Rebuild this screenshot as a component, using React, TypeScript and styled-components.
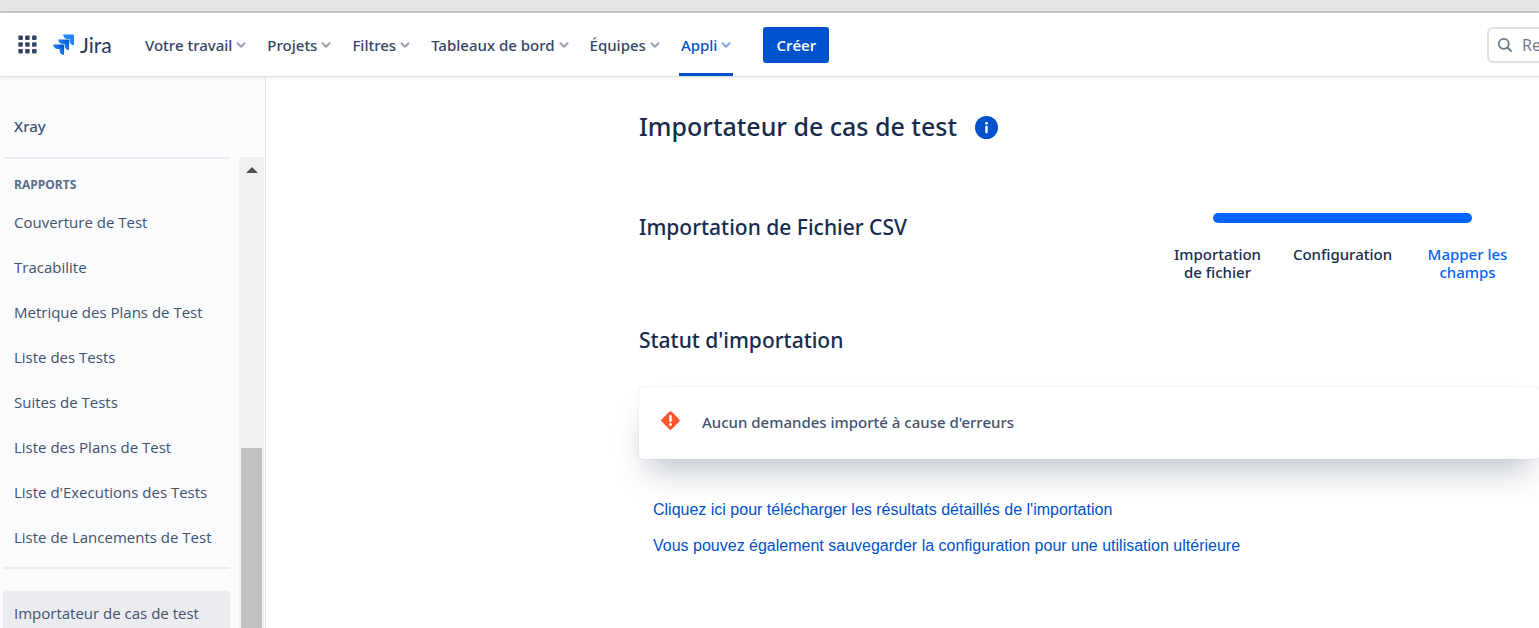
import React from "react";
import styled, { createGlobalStyle, css } from "styled-components";

const sans = `"Segoe UI", "Open Sans", "Noto Sans", sans-serif`;
const sansMedium = `"Segoe UI", "Noto Sans", "Open Sans", sans-serif`;

const GlobalStyle = createGlobalStyle`
  *, *::before, *::after { box-sizing: border-box; }
  html, body, #root { height: 100%; }
  body {
    margin: 0;
    background: #fff;
    color: #172b4d;
    font-family: ${sans};
    font-size: 15px;
    overflow: hidden;
  }
  h1, h2, p, ul, ol { margin: 0; padding: 0; }
  ul, ol { list-style: none; }
  button { font-family: inherit; border: 0; background: none; padding: 0; cursor: pointer; }
  a { text-decoration: none; }
`;

const Page = styled.div`
  display: flex;
  flex-direction: column;
  height: 100%;
`;

const BrowserStrip = styled.div`
  flex: none;
  height: 13px;
  background: #e4e4e4;
  border-bottom: 2px solid #c6c6c6;
`;

const Header = styled.header`
  position: relative;
  z-index: 1;
  flex: none;
  display: flex;
  align-items: center;
  height: 64px;
  padding-left: 18px;
  background: #fff;
  border-bottom: 1px solid #dcdfe8;
  box-shadow: 0 1px 3px rgba(9, 30, 66, 0.08);
  white-space: nowrap;
`;

const AppSwitcher = styled.button`
  display: flex;
  margin-right: 15px;
`;

const Brand = styled.a`
  display: flex;
  align-items: center;
  gap: 6px;
  width: 81px;
  color: #253858;
  font-family: Lato, ${sans};
  font-size: 21px;
  line-height: 24px;
`;

const Nav = styled.nav`
  display: flex;
  align-self: stretch;
  gap: 17px;
  margin-left: 9px;
`;

const NavItem = styled.button<{ $active?: boolean }>`
  display: flex;
  align-items: center;
  gap: 4px;
  padding: 0 2px;
  color: ${(p) => (p.$active ? "#0052cc" : "#344563")};
  font-family: ${sansMedium};
  font-size: 15px;
  font-weight: 500;
  border-top: 3px solid transparent;
  border-bottom: 3px solid ${(p) => (p.$active ? "#0052cc" : "transparent")};

  svg {
    opacity: 0.5;
  }
`;

const CreateButton = styled.button`
  height: 36px;
  margin-left: 30px;
  padding: 0 13px;
  border-radius: 3px;
  background: #0052cc;
  color: #fff;
  font-size: 15px;
  font-weight: 600;
`;

const SearchSlot = styled.div`
  flex: none;
  width: 52px;
  margin-left: auto;
  overflow: hidden;
`;

const SearchBox = styled.label`
  display: flex;
  align-items: center;
  gap: 9px;
  width: 200px;
  height: 36px;
  padding-left: 8px;
  border: 2px solid #dfe1e6;
  border-radius: 6px;
  color: #6b778c;
`;

const SearchInput = styled.input`
  width: 140px;
  padding: 0;
  border: 0;
  outline: 0;
  background: none;
  font-family: inherit;
  font-size: 16px;

  &::placeholder {
    color: #6b778c;
    opacity: 1;
  }
`;

const Body = styled.div`
  flex: 1;
  display: flex;
  min-height: 0;
`;

const Sidebar = styled.aside`
  flex: none;
  display: flex;
  flex-direction: column;
  width: 266px;
  background: #fafbfc;
  border-right: 1px solid #e0e1e4;
`;

const ProjectName = styled.p`
  padding: 37px 14px 0;
  height: 80px;
  color: #42526e;
  font-family: ${sansMedium};
  font-weight: 500;
  line-height: 24px;
`;

const SideScroll = styled.div`
  flex: 1;
  display: flex;
  justify-content: space-between;
  min-height: 0;
  padding-right: 1px;
`;

const SideNav = styled.nav`
  width: 227px;
  margin-left: 3px;
  overflow: hidden;
`;

const Divider = styled.div`
  height: 2px;
  background: #ebecf0;
`;

const GroupTitle = styled.p`
  padding: 17px 11px 6px;
  color: #5e6c84;
  font-size: 12px;
  font-weight: 700;
  line-height: 18px;
`;

const SideLink = styled.a<{ $selected?: boolean }>`
  display: block;
  padding: 0 11px;
  border-radius: 3px;
  color: #42526e;
  font-size: 15px;
  line-height: 45px;
  white-space: nowrap;
  ${(p) =>
    p.$selected &&
    css`
      background: #ebecf0;
    `}
`;

const SideList = styled.ul`
  &:first-of-type {
    margin-bottom: 7px;
  }
  &:last-of-type {
    margin-top: 22px;
  }
`;

const ScrollTrack = styled.div`
  display: flex;
  flex-direction: column;
  align-items: center;
  width: 25px;
  background: #f1f1f1;
`;

const ScrollArrow = styled.div`
  display: flex;
  align-items: center;
  justify-content: center;
  height: 26px;
`;

const ScrollSpace = styled.div`
  flex: 265;
`;

const ScrollThumb = styled.div`
  flex: 180;
  width: 21px;
  background: #c1c1c1;
`;

const Main = styled.main`
  flex: 1;
  min-width: 0;
  padding-top: 30px;
`;

const Content = styled.div`
  width: 900px;
  max-width: 100%;
  margin-left: auto;
`;

const TitleRow = styled.div`
  display: flex;
  align-items: center;
  gap: 18px;
`;

const PageTitle = styled.h1`
  font-family: ${sansMedium};
  font-size: 25px;
  font-weight: 500;
  line-height: 38px;
  padding-bottom: 2px;
`;

const InfoButton = styled.button`
  display: flex;
`;

const ImportRow = styled.section`
  display: flex;
  justify-content: space-between;
  margin-top: 60px;
`;

const SectionTitle = styled.h2`
  font-family: ${sansMedium};
  font-size: 21px;
  font-weight: 500;
  line-height: 40px;
`;

const Steps = styled.ol`
  display: grid;
  grid-template-columns: repeat(3, 125px);
  margin: 6px 9px 0 0;
`;

const ProgressBar = styled.li`
  grid-column: 1 / -1;
  height: 10px;
  margin: 0 58px;
  border-radius: 5px;
  background: #0065ff;
`;

const Step = styled.li<{ $current?: boolean }>`
  padding: 22px 12px 0;
  color: ${(p) => (p.$current ? "#0065ff" : "#172b4d")};
  font-family: ${sansMedium};
  font-size: 15px;
  font-weight: 500;
  line-height: 18px;
  text-align: center;
`;

const StatusTitle = styled(SectionTitle)`
  margin-top: 39px;
`;

const Alert = styled.div`
  display: flex;
  align-items: center;
  gap: 22px;
  height: 72px;
  margin-top: 27px;
  padding: 0 22px 2px;
  border-radius: 4px;
  background: #fff;
  box-shadow: 0 0 1px rgba(9, 30, 66, 0.31), 0 20px 32px -8px rgba(9, 30, 66, 0.25);
  color: #42526e;
  font-family: ${sansMedium};
  font-size: 15px;
  font-weight: 500;

  svg {
    margin-bottom: 4px;
  }
`;

const ResultLinks = styled.ul`
  margin: 33px 14px 0;
  font-family: Arial, "Liberation Sans", sans-serif;
  font-size: 16px;
  line-height: 36px;

  a {
    color: #0052cc;
  }
`;

const Chevron = () => (
  <svg width="10" height="8" viewBox="0 0 10 8" fill="none" aria-hidden="true">
    <path d="M1.5 2.3 5 5.8l3.5-3.5" stroke="currentColor" strokeWidth="2" strokeLinecap="round" strokeLinejoin="round" />
  </svg>
);

const GridIcon = () => (
  <svg width="20" height="20" viewBox="0 0 20 20" fill="#344563" aria-hidden="true">
    {[0.5, 7.2, 14].map((y) =>
      [0.3, 7.1, 14].map((x) => <rect key={`${x}-${y}`} x={x} y={y} width="4.6" height="4.6" rx="1" />)
    )}
  </svg>
);

const JiraMark = () => (
  <svg width="21" height="21" viewBox="0 0 21 21" aria-hidden="true">
    <defs>
      <linearGradient id="mid" x1="1" y1="0" x2="0.4" y2="0.6">
        <stop offset="0.18" stopColor="#0052cc" />
        <stop offset="1" stopColor="#2684ff" />
      </linearGradient>
    </defs>
    <path d="M20.2.5H10.2a4.5 4.5 0 0 0 4.5 4.5h1.8v1.8A4.5 4.5 0 0 0 21 11.3V1.3a.8.8 0 0 0-.8-.8z" fill="#2684ff" />
    <path d="M15.2 5.5H5.2a4.5 4.5 0 0 0 4.5 4.5h1.9v1.8a4.5 4.5 0 0 0 4.5 4.5V6.3a.8.8 0 0 0-.9-.8z" fill="url(#mid)" />
    <path d="M10.2 10.5H.2A4.5 4.5 0 0 0 4.7 15h1.9v1.8a4.5 4.5 0 0 0 4.5 4.2V11.3a.8.8 0 0 0-.9-.8z" fill="url(#mid)" />
  </svg>
);

const SearchIcon = () => (
  <svg width="16" height="16" viewBox="0 0 16 16" fill="none" stroke="currentColor" strokeWidth="1.8" aria-hidden="true">
    <circle cx="6.8" cy="6.8" r="5" />
    <path d="m10.5 10.5 3.5 3.5" strokeLinecap="round" />
  </svg>
);

const InfoIcon = () => (
  <svg width="23" height="23" viewBox="0 0 23 23" aria-hidden="true">
    <circle cx="11.5" cy="11.5" r="11.5" fill="#0052cc" />
    <circle cx="11.5" cy="7.3" r="1.4" fill="#fff" />
    <rect x="10.3" y="9.8" width="2.4" height="7.4" rx="1" fill="#fff" />
  </svg>
);

const ErrorIcon = () => (
  <svg width="19" height="19" viewBox="0 0 19 19" aria-hidden="true">
    <rect x="2.5" y="2.5" width="14" height="14" rx="1.8" transform="rotate(45 9.5 9.5)" fill="#ff5630" />
    <rect x="8.2" y="4" width="2.6" height="7" rx="1.2" fill="#fff" />
    <circle cx="9.5" cy="13.5" r="1.4" fill="#fff" />
  </svg>
);

const navItems = ["Votre travail", "Projets", "Filtres", "Tableaux de bord", "Équipes", "Appli"];

const reports = [
  "Couverture de Test",
  "Tracabilite",
  "Metrique des Plans de Test",
  "Liste des Tests",
  "Suites de Tests",
  "Liste des Plans de Test",
  "Liste d'Executions des Tests",
  "Liste de Lancements de Test",
];

const steps = ["Importation de fichier", "Configuration", "Mapper les champs"];

export default function App() {
  return (
    <Page>
      <GlobalStyle />
      <BrowserStrip />
      <Header>
        <AppSwitcher aria-label="Applications">
          <GridIcon />
        </AppSwitcher>
        <Brand href="#">
          <JiraMark />
          Jira
        </Brand>
        <Nav>
          {navItems.map((label) => (
            <NavItem key={label} $active={label === "Appli"}>
              {label}
              <Chevron />
            </NavItem>
          ))}
        </Nav>
        <CreateButton>Créer</CreateButton>
        <SearchSlot>
          <SearchBox>
            <SearchIcon />
            <SearchInput type="search" placeholder="Rechercher" aria-label="Rechercher" />
          </SearchBox>
        </SearchSlot>
      </Header>
      <Body>
        <Sidebar>
          <ProjectName>Xray</ProjectName>
          <SideScroll>
            <SideNav>
              <Divider />
              <GroupTitle>RAPPORTS</GroupTitle>
              <SideList>
                {reports.map((label) => (
                  <li key={label}>
                    <SideLink href="#">{label}</SideLink>
                  </li>
                ))}
              </SideList>
              <Divider />
              <SideList>
                <li>
                  <SideLink href="#" $selected>
                    Importateur de cas de test
                  </SideLink>
                </li>
              </SideList>
            </SideNav>
            <ScrollTrack>
              <ScrollArrow>
                <svg width="12" height="6" viewBox="0 0 12 6" aria-hidden="true">
                  <path d="M6 0l6 6H0z" fill="#505050" />
                </svg>
              </ScrollArrow>
              <ScrollSpace />
              <ScrollThumb />
            </ScrollTrack>
          </SideScroll>
        </Sidebar>
        <Main>
          <Content>
            <TitleRow>
              <PageTitle>Importateur de cas de test</PageTitle>
              <InfoButton aria-label="Informations">
                <InfoIcon />
              </InfoButton>
            </TitleRow>
            <ImportRow>
              <SectionTitle>Importation de Fichier CSV</SectionTitle>
              <Steps>
                <ProgressBar role="presentation" />
                {steps.map((label, i) => (
                  <Step key={label} $current={i === steps.length - 1}>
                    {label}
                  </Step>
                ))}
              </Steps>
            </ImportRow>
            <StatusTitle>Statut d'importation</StatusTitle>
            <Alert role="alert">
              <ErrorIcon />
              Aucun demandes importé à cause d'erreurs
            </Alert>
            <ResultLinks>
              <li>
                <a href="#">Cliquez ici pour télécharger les résultats détaillés de l'importation</a>
              </li>
              <li>
                <a href="#">Vous pouvez également sauvegarder la configuration pour une utilisation ultérieure</a>
              </li>
            </ResultLinks>
          </Content>
        </Main>
      </Body>
    </Page>
  );
}
